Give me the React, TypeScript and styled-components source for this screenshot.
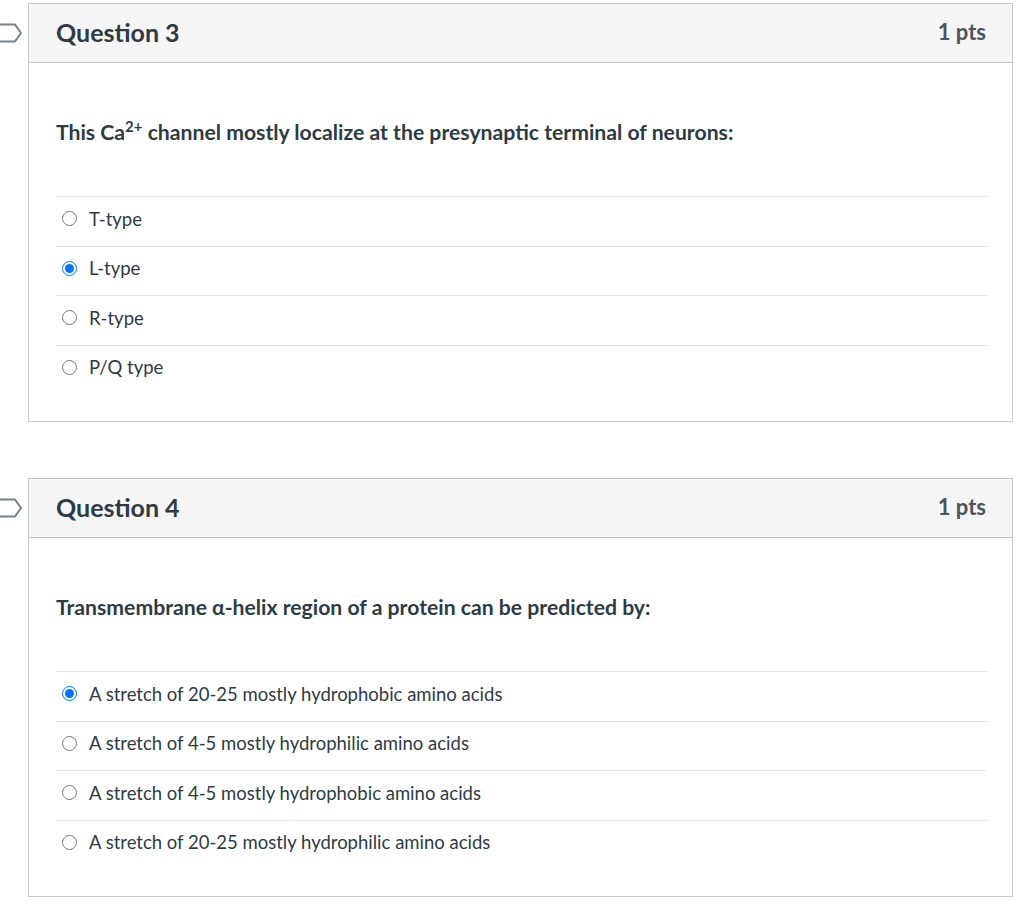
import styled, { createGlobalStyle } from "styled-components";

const GlobalStyle = createGlobalStyle`
  body {
    margin: 0;
    background: #ffffff;
    font-family: Lato, "Noto Sans", sans-serif;
    color: #2d3b45;
  }
`;

const Page = styled.div`
  display: flex;
  flex-direction: column;
  gap: 56px;
  padding: 3px 11px 20px 28px;
`;

const Card = styled.div`
  position: relative;
  border: 1px solid #c4c8cb;
  background: #ffffff;
`;

const Flag = styled.svg`
  position: absolute;
  left: -29px;
  top: 18px;
  width: 22px;
  height: 22px;
`;

const Header = styled.div`
  display: flex;
  align-items: center;
  justify-content: space-between;
  height: 59px;
  padding: 0 26px 3px 27px;
  box-sizing: border-box;
  background: #f5f5f5;
  border-bottom: 1px solid #c4c8cb;
`;

const Title = styled.h2`
  margin: 0;
  font-size: 25px;
  font-weight: 700;
  color: #2d3b45;
`;

const Points = styled.div`
  font-size: 22px;
  font-weight: 700;
  color: #4b545b;
`;

const Body = styled.div`
  padding: 57px 25px 27px 27px;
`;

const Prompt = styled.p`
  margin: 0 0 51px;
  font-size: 21.2px;
  line-height: 25px;
  font-weight: 700;
  color: #2d3b45;

  sup {
    font-size: 15px;
    line-height: 0;
  }
`;

const AnswerList = styled.div`
  display: flex;
  flex-direction: column;
`;

const Answer = styled.label`
  display: flex;
  align-items: center;
  gap: 12px;
  height: 49.5px;
  box-sizing: border-box;
  padding: 0 0 5px 6px;
  border-top: 1px solid #e2e4e6;
  font-size: 18.5px;
  color: #2d3b45;

  input {
    margin: 0;
    width: 15px;
    height: 15px;
  }
`;

type QuestionProps = {
  number: number;
  prompt: React.ReactNode;
  answers: string[];
  selected: number;
};

function FlagIcon() {
  return (
    <Flag viewBox="0 0 22 22">
      <path
        d="M-4 2.5 H15 L21 11 L15 19.5 H-4 Z"
        fill="#ffffff"
        stroke="#75828c"
        strokeWidth="2"
        strokeLinejoin="round"
      />
    </Flag>
  );
}

function Question({ number, prompt, answers, selected }: QuestionProps) {
  return (
    <Card>
      <FlagIcon />
      <Header>
        <Title>Question {number}</Title>
        <Points>1 pts</Points>
      </Header>
      <Body>
        <Prompt>{prompt}</Prompt>
        <AnswerList>
          {answers.map((a, i) => (
            <Answer key={a}>
              <input type="radio" name={`q${number}`} defaultChecked={i === selected} />
              {a}
            </Answer>
          ))}
        </AnswerList>
      </Body>
    </Card>
  );
}

export default function App() {
  return (
    <>
      <GlobalStyle />
      <Page>
        <Question
          number={3}
          prompt={
            <>
              This Ca<sup>2+</sup> channel mostly localize at the presynaptic terminal of neurons:
            </>
          }
          answers={["T-type", "L-type", "R-type", "P/Q type"]}
          selected={1}
        />
        <Question
          number={4}
          prompt="Transmembrane α-helix region of a protein can be predicted by:"
          answers={[
            "A stretch of 20-25 mostly hydrophobic amino acids",
            "A stretch of 4-5 mostly hydrophilic amino acids",
            "A stretch of 4-5 mostly hydrophobic amino acids",
            "A stretch of 20-25 mostly hydrophilic amino acids",
          ]}
          selected={0}
        />
      </Page>
    </>
  );
}
